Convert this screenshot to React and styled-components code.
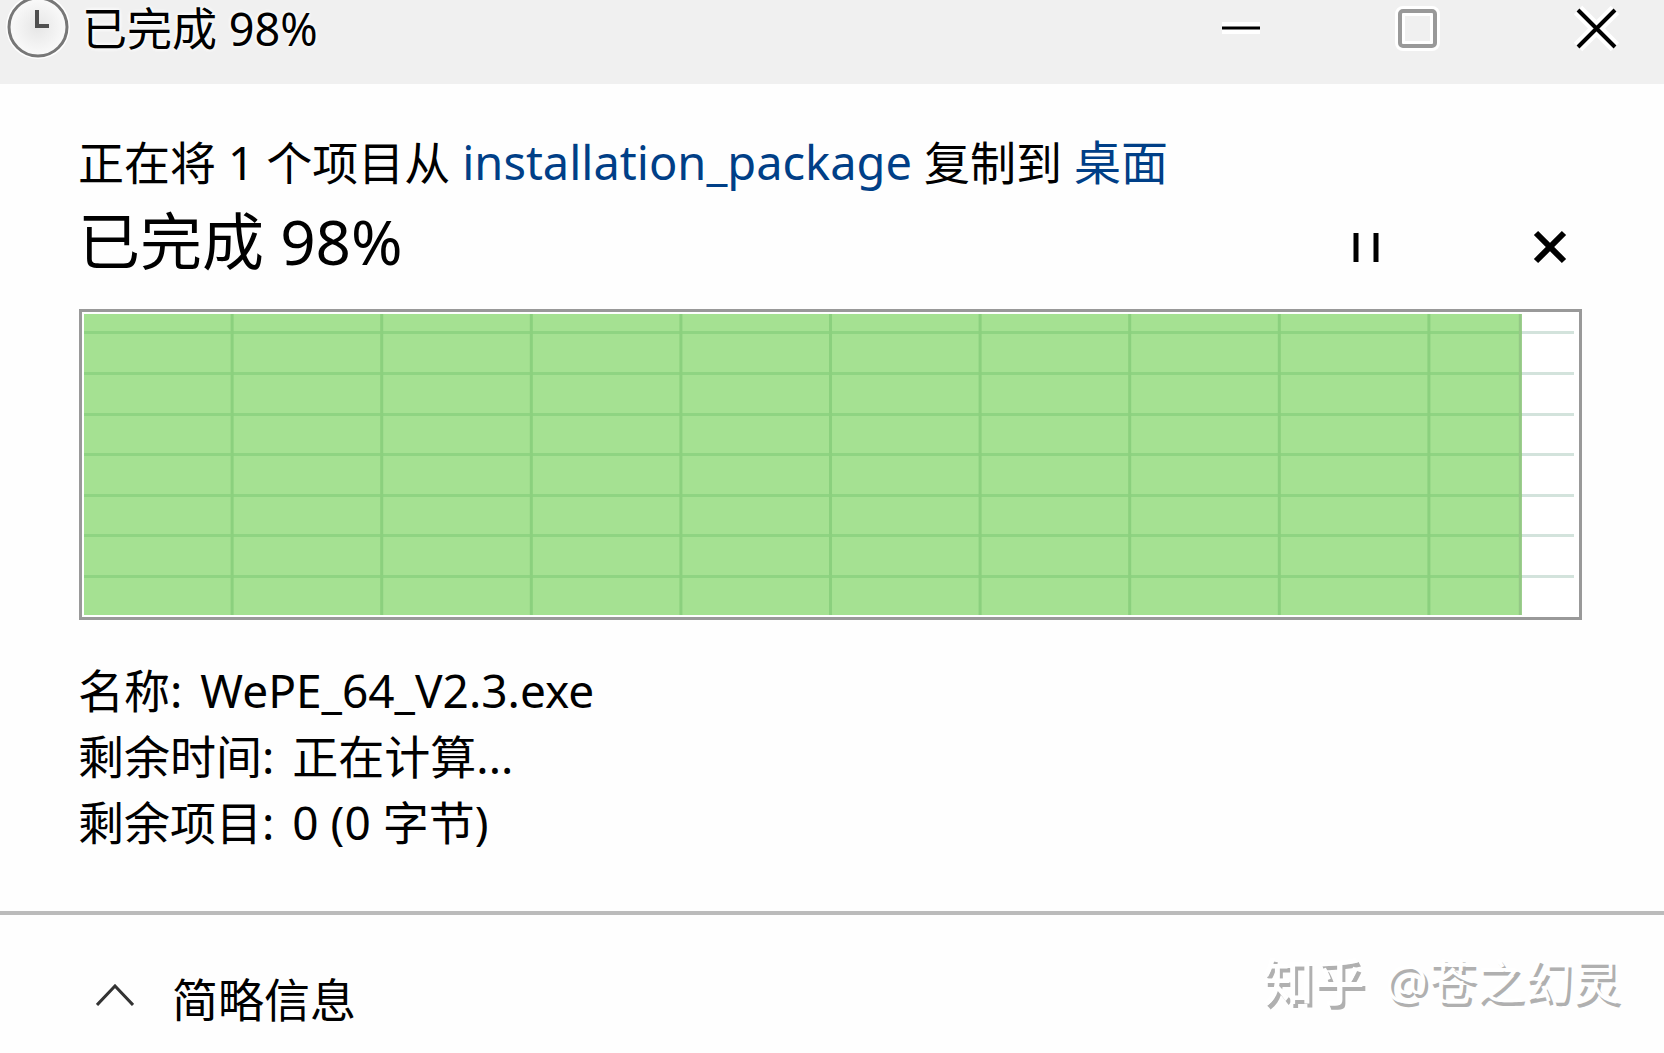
import React from "react";
import styled, { createGlobalStyle } from "styled-components";

const GlobalStyle = createGlobalStyle`
  * {
    box-sizing: border-box;
  }

  body {
    margin: 0;
    background: #fefefe;
    color: #000;
    font-family: "Noto Sans", "Noto Sans CJK SC", sans-serif;
    font-size: 46px;
    line-height: 66px;
  }
`;

const Dialog = styled.div`
  display: flex;
  flex-direction: column;
  min-height: 100vh;
`;

const TitleBar = styled.header`
  display: flex;
  align-items: flex-start;
  justify-content: space-between;
  height: 84px;
  padding: 0 47px 0 6px;
  background: #f0f0f0;
`;

const Caption = styled.div`
  display: flex;
  align-items: flex-start;
  gap: 12px;

  h1 {
    margin: 0;
    font-size: 45px;
    font-weight: 400;
    line-height: 58px;
    text-shadow: 0 0 4px #fff, 0 0 4px #fff;
  }

  svg {
    display: block;
  }
`;

const ButtonGroup = styled.div`
  display: flex;
  align-items: center;
  gap: ${(props) => props.$gap};
`;

const IconButton = styled.button`
  display: flex;
  align-items: center;
  justify-content: center;
  width: 40px;
  height: 56px;
  padding: 0;
  border: none;
  background: none;
  cursor: pointer;

  svg {
    flex: none;
    overflow: visible;
  }
`;

const Body = styled.main`
  padding: 45px 82px 0 78px;
`;

const Summary = styled.p`
  margin: 0;

  a {
    color: #003f87;
    font-size: 47px;
    text-decoration: none;
  }
`;

const StatusRow = styled.div`
  display: flex;
  align-items: center;
  justify-content: space-between;
  height: 88px;
  margin-bottom: 26px;
  padding-right: 12px;

  h2 {
    margin: 0;
    padding-top: 4px;
    font-size: 62px;
    font-weight: 400;
    line-height: 88px;
  }

  ${ButtonGroup} {
    padding-top: 16px;
  }
`;

const ChartFrame = styled.div`
  height: 311px;
  margin-left: 1px;
  border: 3px solid #999;
  padding: 2px;
  background: #fff;

  svg {
    display: block;
    width: 100%;
    height: 100%;
  }
`;

const Details = styled.dl`
  margin: 37px 0 0;

  div {
    display: flex;
    gap: 18px;
  }

  dt,
  dd {
    margin: 0;
  }
`;

const Footer = styled.footer`
  display: flex;
  flex: 1;
  align-items: flex-start;
  justify-content: space-between;
  margin-top: 56px;
  padding: 33px 44px 0 96px;
  border-top: 4px solid #bbb;
`;

const ToggleButton = styled.button`
  display: flex;
  align-items: flex-start;
  gap: 38px;
  margin-top: 18px;
  padding: 0;
  border: none;
  background: none;
  color: #000;
  font: inherit;
  cursor: pointer;

  svg {
    margin-top: 18px;
  }
`;

const Watermark = styled.div`
  display: flex;
  align-items: center;
  gap: 20px;
  color: #fff;
  font-size: 48px;
  text-shadow: 3px 4px 0 #b0b0b0;

  strong {
    font-size: 51px;
    font-weight: 500;
  }
`;

const percent = 98;
const columns = [1, 2, 3, 4, 5, 6, 7, 8, 9];
const rows = [18, 59, 100, 140, 181, 221, 262];

const ClockIcon = () => (
  <svg width="64" height="60" viewBox="0 0 64 60" aria-hidden="true">
    <defs>
      <radialGradient id="face">
        <stop offset="0" stopColor="#e6e6e6" />
        <stop offset="1" stopColor="#fafafa" />
      </radialGradient>
    </defs>
    <circle cx="32" cy="27" r="32" fill="#fff" />
    <circle cx="32" cy="27" r="29" fill="url(#face)" stroke="#777" strokeWidth="3" />
    <path d="M31 10v16h12" fill="none" stroke="#505050" strokeWidth="4" />
  </svg>
);

const SpeedChart = () => (
  <ChartFrame
    role="progressbar"
    aria-label="已完成"
    aria-valuenow={percent}
    aria-valuemin={0}
    aria-valuemax={100}
  >
    <svg>
      {rows.map((y) => (
        <rect key={y} y={y - 1} width="99.8%" height="3" fill="#d3e3dc" />
      ))}
      <rect width="96.3%" height="100%" fill="#a5e192" />
      {rows.map((y) => (
        <rect key={y} y={y - 1} width="96.3%" height="3" fill="#8fd482" />
      ))}
      {columns.map((n) => (
        <rect key={n} x={`${n * 10.02 - 0.2}%`} width="3" height="100%" fill="#8bd07e" />
      ))}
      <rect x="96.1%" width="3" height="100%" fill="#94c886" />
    </svg>
  </ChartFrame>
);

const App = () => {
  return (
    <Dialog>
      <GlobalStyle />
      <TitleBar>
        <Caption>
          <ClockIcon />
          <h1>已完成 {percent}%</h1>
        </Caption>
        <ButtonGroup $gap="138px">
          <IconButton aria-label="最小化">
            <svg width="40" height="40">
              <path d="M1 20h38" stroke="#fff" strokeWidth="12" />
              <path d="M1 20h38" stroke="#000" strokeWidth="3" />
            </svg>
          </IconButton>
          <IconButton aria-label="最大化">
            <svg width="40" height="40">
              <rect x="1" y="3" width="35" height="35" rx="3" fill="#f0f0f0" stroke="#fff" strokeWidth="10" />
              <rect x="1" y="3" width="35" height="35" rx="3" fill="none" stroke="#999" strokeWidth="4" />
            </svg>
          </IconButton>
          <IconButton aria-label="关闭">
            <svg width="40" height="40">
              <path d="M1 2l37 37M38 2L1 39" stroke="#fff" strokeWidth="12" />
              <path d="M1 2l37 37M38 2L1 39" stroke="#000" strokeWidth="4" />
            </svg>
          </IconButton>
        </ButtonGroup>
      </TitleBar>

      <Body>
        <Summary>
          正在将 1 个项目从 <a href="#source">installation_package</a> 复制到{" "}
          <a href="#desktop">桌面</a>
        </Summary>
        <StatusRow>
          <h2>已完成 {percent}%</h2>
          <ButtonGroup $gap="144px">
            <IconButton aria-label="暂停">
              <svg width="26" height="29">
                <path d="M3 0v29M23 0v29" stroke="#000" strokeWidth="5" />
              </svg>
            </IconButton>
            <IconButton aria-label="取消">
              <svg width="30" height="30">
                <path d="M1 1l28 28M29 1L1 29" stroke="#000" strokeWidth="6" />
              </svg>
            </IconButton>
          </ButtonGroup>
        </StatusRow>
        <SpeedChart />
        <Details>
          <div>
            <dt>名称:</dt>
            <dd>WePE_64_V2.3.exe</dd>
          </div>
          <div>
            <dt>剩余时间:</dt>
            <dd>正在计算...</dd>
          </div>
          <div>
            <dt>剩余项目:</dt>
            <dd>0 (0 字节)</dd>
          </div>
        </Details>
      </Body>

      <Footer>
        <ToggleButton>
          <svg width="38" height="22" aria-hidden="true">
            <path d="M1 21L19 2l18 19" fill="none" stroke="#333" strokeWidth="3" />
          </svg>
          简略信息
        </ToggleButton>
        <Watermark>
          <strong>知乎</strong>
          <span>@苍之幻灵</span>
        </Watermark>
      </Footer>
    </Dialog>
  );
};

export default App;
